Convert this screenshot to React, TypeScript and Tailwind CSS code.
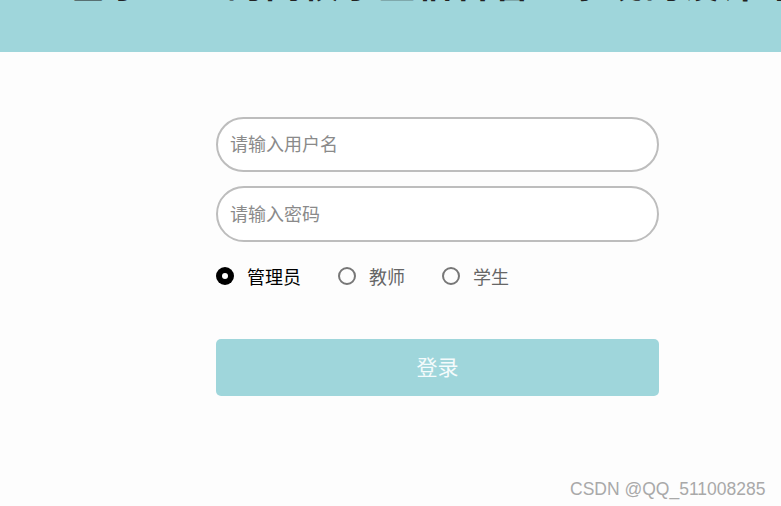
import { useState } from "react";

type Role = "admin" | "teacher" | "student";

const roles: { key: Role; label: string }[] = [
  { key: "admin", label: "管理员" },
  { key: "teacher", label: "教师" },
  { key: "student", label: "学生" },
];

export default function App() {
  const [role, setRole] = useState<Role>("admin");
  const [username, setUsername] = useState("");
  const [password, setPassword] = useState("");

  return (
    <div className="min-h-screen bg-[#fdfdfd] font-['Noto_Sans_CJK_SC','Noto_Sans',sans-serif] relative overflow-hidden">
      {/* header, title scrolled mostly out of view */}
      <header className="h-[52px] bg-[#9fd6db] overflow-hidden">
        <h1 className="mt-[-43px] pl-[70px] whitespace-nowrap text-[36px] font-bold leading-[50px] text-[#222] tracking-[2px]">
          基于SSM的高校学生宿舍管理系统的设计与实现方案
        </h1>
      </header>

      <main className="w-[443px] ml-[216px] pt-[65px]">
        <div className="flex flex-col gap-[14px]">
          <input
            value={username}
            onChange={(e) => setUsername(e.target.value)}
            placeholder="请输入用户名"
            className="h-[55px] w-full rounded-full border-2 border-[#bdbdbd] bg-white pl-[12px] pr-[14px] pb-[4px] text-[18px] text-[#333] placeholder:text-[#8a8a8a] outline-none"
          />
          <input
            type="password"
            value={password}
            onChange={(e) => setPassword(e.target.value)}
            placeholder="请输入密码"
            className="h-[56px] w-full rounded-full border-2 border-[#bdbdbd] bg-white pl-[12px] pr-[14px] pb-[2px] text-[18px] text-[#333] placeholder:text-[#8a8a8a] outline-none"
          />
        </div>

        <div className="mt-[21px] flex items-center h-[26px]">
          {roles.map((r) => {
            const active = role === r.key;
            return (
              <label
                key={r.key}
                onClick={() => setRole(r.key)}
                className="mr-[37px] flex items-center cursor-pointer"
              >
                {active ? (
                  <span className="w-[18px] h-[18px] rounded-full bg-black flex items-center justify-center">
                    <span className="w-[6px] h-[6px] rounded-full bg-white" />
                  </span>
                ) : (
                  <span className="w-[18px] h-[18px] rounded-full border-2 border-[#777]" />
                )}
                <span className={`ml-[13px] text-[18px] leading-none ${active ? "text-black" : "text-[#666]"}`}>
                  {r.label}
                </span>
              </label>
            );
          })}
        </div>

        <button className="mt-[50px] h-[57px] w-full rounded-[5px] bg-[#9fd6db] pb-[2px] text-[21px] text-[#f4fbfc]">
          登录
        </button>
      </main>

      <div className="absolute left-[570px] top-[476px] font-['Liberation_Sans',Arial,sans-serif] text-[17.5px] text-[#a9a9a9]">
        CSDN @QQ_511008285
      </div>
    </div>
  );
}
